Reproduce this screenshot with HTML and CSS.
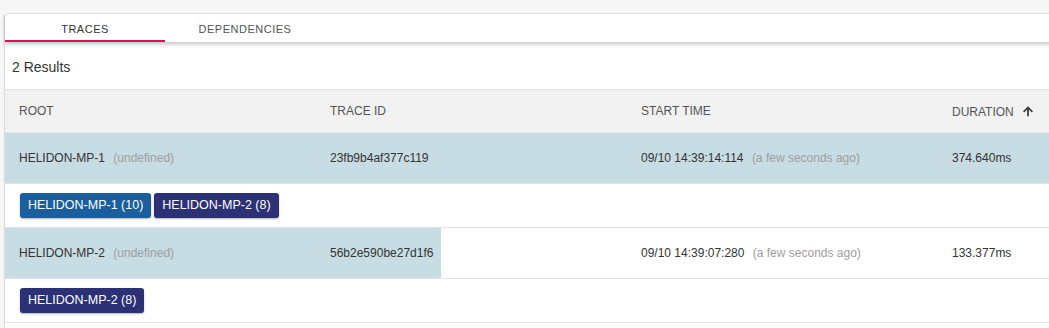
FILE: index.html
```html
<!DOCTYPE html>
<html lang="en">
  <head>
    <meta charset="UTF-8" />
    <title>Traces</title>
    <link rel="stylesheet" href="styles.css">
  </head>
  <body>
    <div class="card">
      <div class="tabs">
        <div class="tab tab--active">TRACES</div>
        <div class="tab">DEPENDENCIES</div>
      </div>
      <div class="results">2 Results</div>
      <table class="traces">
        <thead>
          <tr>
            <th>ROOT</th>
            <th>TRACE ID</th>
            <th>START TIME</th>
            <th>DURATION
              <svg class="sort" viewBox="0 0 24 24" width="14" height="14"><path d="M3.5 12.5l1.9 1.9 5.1-5.1V21h3V9.3l5.1 5.1 1.9-1.9L12 4z" fill="#3a3a3a"/></svg>
            </th>
          </tr>
        </thead>
        <tbody>
          <tr class="trace trace--selected">
            <td>HELIDON-MP-1 <span class="muted">(undefined)</span></td>
            <td>23fb9b4af377c119</td>
            <td>09/10 14:39:14:114 <span class="muted">(a few seconds ago)</span></td>
            <td>374.640ms</td>
          </tr>
          <tr class="services">
            <td colspan="4">
              <span class="badge badge--blue">HELIDON-MP-1 (10)</span><span class="badge badge--navy">HELIDON-MP-2 (8)</span>
            </td>
          </tr>
          <tr class="trace trace--fading">
            <td>HELIDON-MP-2 <span class="muted">(undefined)</span></td>
            <td>56b2e590be27d1f6</td>
            <td>09/10 14:39:07:280 <span class="muted">(a few seconds ago)</span></td>
            <td>133.377ms</td>
          </tr>
          <tr class="services">
            <td colspan="4">
              <span class="badge badge--navy">HELIDON-MP-2 (8)</span>
            </td>
          </tr>
        </tbody>
      </table>
    </div>
  </body>
</html>
```

FILE: styles.css
```css
body {
    margin: 0;
    background-color: #f7f7f7;
    font-family: "Liberation Sans", Arial, sans-serif;
    color: #333333;
    overflow: hidden;
}

.card {
    margin: 14px 0 0 5px;
    width: 1244px;
    background-color: #ffffff;
    border-top-left-radius: 4px;
    box-shadow: -1px 0 1px rgba(0, 0, 0, 0.12), 0 -1px 1px rgba(0, 0, 0, 0.04);
    height: 400px;
}

.tabs {
    display: flex;
    height: 28px;
    box-shadow: 0 2px 4px rgba(0, 0, 0, 0.25);
    position: relative;
}

.tab {
    width: 160px;
    box-sizing: border-box;
    text-align: center;
    font-size: 11px;
    letter-spacing: 0.5px;
    color: #555555;
    padding-top: 9px;
}

.tab--active {
    color: #333333;
    border-bottom: 2px solid #e8084f;
}

.results {
    font-size: 14px;
    padding: 17px 0 0 7px;
    height: 30px;
    border-bottom: 1px solid #e2e2e2;
}

.traces {
    border-collapse: collapse;
    width: 1244px;
    table-layout: fixed;
    font-size: 12px;
}

.traces th {
    background-color: #f2f2f2;
    color: #555555;
    font-weight: normal;
    text-align: left;
    height: 42px;
    padding: 0 14px;
    border-bottom: 1px solid #e8e8e8;
}

.sort {
    vertical-align: -2px;
    margin-left: 4px;
}

.traces td {
    padding: 0 14px;
}

.trace td {
    height: 50px;
    border-bottom: 1px solid #e4e4e4;
}

.trace--selected td {
    background-color: #c8dce3;
}

.trace--fading td:nth-child(1) {
    background-color: #c8dce3;
}

.trace--fading td:nth-child(2) {
    background: linear-gradient(to right, #c8dce3 125px, transparent 125px);
}

.muted {
    color: #9e9e9e;
    margin-left: 5px;
}

.services td {
    height: 43px;
    padding: 0 15px;
    border-bottom: 1px solid #e4e4e4;
}

.badge {
    display: inline-block;
    color: #ffffff;
    font-size: 12.5px;
    line-height: 25px;
    padding: 0 8px;
    border-radius: 3px;
    margin-right: 3px;
    box-shadow: 0 1px 2px rgba(0, 0, 0, 0.3);
}

.badge--blue {
    background-color: #1b5e9d;
}

.badge--navy {
    background-color: #2b3174;
}
```
